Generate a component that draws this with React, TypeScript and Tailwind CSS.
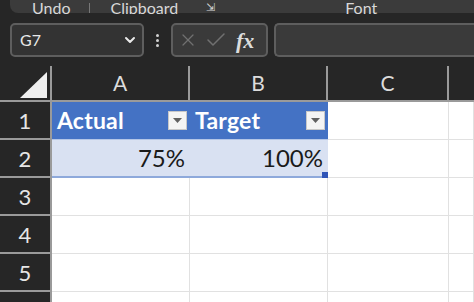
import { ChevronDown, X, Check } from 'lucide-react';

const COLS = ['A', 'B', 'C', 'D'];
const ROWS = [1, 2, 3, 4, 5, 6];
const font = { fontFamily: 'Lato, "Noto Sans", sans-serif' };

function FilterButton() {
  return (
    <span className="flex h-[19px] w-[19px] items-center justify-center bg-[#f4f4f4] border border-[#c8c8c8]">
      <svg width="9" height="5" viewBox="0 0 9 5" aria-hidden="true">
        <path d="M0 0h9L4.5 5z" fill="#606060" />
      </svg>
    </span>
  );
}

function Cell({ row, col }: { row: number; col: number }) {
  const widths = ['w-[138px]', 'w-[138px]', 'w-[121px]', 'flex-1'];
  const w = widths[col];
  if (row === 1 && col < 2) {
    return (
      <div className={`${w} h-full flex items-center justify-between bg-[#4472c4] border-b border-[#b4c6e7] pl-[5px] pr-[3px]`}>
        <span className="text-[23px] font-bold text-white leading-none tracking-[0.2px]">{col === 0 ? 'Actual' : 'Target'}</span>
        <FilterButton />
      </div>
    );
  }
  if (row === 2 && col < 2) {
    return (
      <div className={`${w} relative h-full flex items-center justify-end bg-[#d9e1f2] border-b-2 border-[#8ea9db] pr-[5px]`}>
        <span className="text-[24px] text-[#1a1a1a] leading-none">{col === 0 ? '75%' : '100%'}</span>
        {col === 1 && <span className="absolute right-0 bottom-[-2px] h-[6px] w-[6px] bg-[#3055b8]" />}
      </div>
    );
  }
  return <div className={`${w} h-full bg-white border-r border-b border-[#e1e1e1]`} />;
}

export default function App() {
  return (
    <div className="w-[474px] h-[302px] overflow-hidden bg-[#262626] text-[#e6e6e6]" style={font}>
      {/* ribbon bottom edge */}
      <div className="h-[14px] overflow-hidden pl-[10px]">
        <div className="h-[13px] rounded-bl-[8px] bg-[#3b3b3b] flex items-end text-[16px] leading-none text-[#d8d8d8]">
          <div className="flex items-end -mb-[3px]">
            <span className="ml-[22px]">Undo</span>
            <span className="ml-[18px] w-px h-[10px] bg-[#777] mb-[3px]" />
            <span className="ml-[21px]">Clipboard</span>
            <span className="ml-[28px] text-[11px] mb-[4px]">⇲</span>
            <span className="ml-[130px]">Font</span>
          </div>
        </div>
      </div>

      {/* formula bar */}
      <div className="flex items-center h-[52px] pl-[10px] pt-[6px] pb-[6px]">
        <div className="flex items-center justify-between w-[134px] h-[34px] rounded-[5px] border-2 border-[#5e5e5e] bg-[#333333] pl-[8px] pr-[4px]">
          <span className="text-[16px] text-[#e8e8e8]">G7</span>
          <ChevronDown className="h-[16px] w-[16px] text-[#eaeaea]" strokeWidth={3} />
        </div>
        <div className="flex flex-col gap-[2px] mx-[12px]">
          <span className="h-[3px] w-[3px] rounded-full bg-[#d0d0d0]" />
          <span className="h-[3px] w-[3px] rounded-full bg-[#d0d0d0]" />
          <span className="h-[3px] w-[3px] rounded-full bg-[#d0d0d0]" />
        </div>
        <div className="flex items-center w-[97px] h-[34px] rounded-[5px] border-2 border-[#5e5e5e] bg-[#3a3a3a] pl-[5px]">
          <X className="h-[20px] w-[20px] text-[#707070]" strokeWidth={1.5} />
          <Check className="h-[24px] w-[24px] ml-[6px] text-[#707070]" strokeWidth={1.5} />
          <span className="ml-[8px] text-[22px] font-bold italic text-[#dcdcdc]" style={{ fontFamily: '"Liberation Serif", serif' }}>
            fx
          </span>
        </div>
        <div className="ml-[6px] flex-1 h-[34px] rounded-l-[5px] border-2 border-r-0 border-[#5e5e5e] bg-[#3a3a3a]" />
      </div>

      {/* column headers */}
      <div className="flex h-[36px] border-b-2 border-[#9a9a9a]">
        <div className="w-[52px] relative border-r-2 border-[#9a9a9a]">
          <svg className="absolute left-[20px] top-[6px]" width="27" height="26" viewBox="0 0 27 26" aria-hidden="true">
            <path d="M0 26L27 0V26z" fill="#efefef" />
          </svg>
        </div>
        {COLS.map((c, i) => (
          <div
            key={c}
            className={`${i === 3 ? 'flex-1' : i === 2 ? 'w-[121px] border-r-2' : 'w-[138px] border-r-2'} border-[#9a9a9a] flex items-center justify-center text-[21px] text-[#dcdcdc]`}
          >
            {i < 3 ? c : ''}
          </div>
        ))}
      </div>

      {/* rows */}
      {ROWS.map((r) => (
        <div key={r} className="flex h-[38px]">
          <div className="w-[52px] h-full flex items-center justify-center border-r-2 border-b-2 border-[#9a9a9a] bg-[#262626] text-[22px] text-[#e6e6e6]">
            {r < 6 ? r : ''}
          </div>
          {COLS.map((c, i) => (
            <Cell key={c} row={r} col={i} />
          ))}
        </div>
      ))}
    </div>
  );
}
